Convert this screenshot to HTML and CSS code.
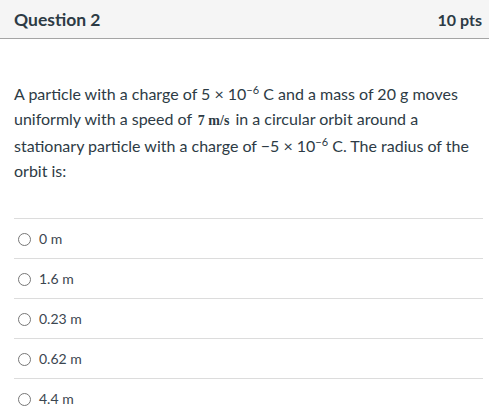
FILE: index.html
```html
<!DOCTYPE html>
<html>
<head>
<meta charset="utf-8">
<link rel="stylesheet" href="styles.css">
</head>
<body>
<div class="question">
  <div class="header">
    <span class="title">Question 2</span>
    <span class="pts">10 pts</span>
  </div>
  <div class="body">
    <p class="text">A particle with a charge of 5 × 10<sup>−6</sup> C and a mass of 20 g moves uniformly with a speed of <span class="img">7 m/s</span> in a circular orbit around a stationary particle with a charge of −5 × 10<sup>−6</sup> C. The radius of the orbit is:</p>
    <div class="answers">
      <div class="answer"><span class="radio"></span><span class="label">0 m</span></div>
      <div class="answer"><span class="radio"></span><span class="label">1.6 m</span></div>
      <div class="answer"><span class="radio"></span><span class="label">0.23 m</span></div>
      <div class="answer"><span class="radio"></span><span class="label">0.62 m</span></div>
      <div class="answer"><span class="radio"></span><span class="label">4.4 m</span></div>
    </div>
  </div>
</div>
</body>
</html>
```

FILE: styles.css
```css
html, body {
  margin: 0;
  padding: 0;
  background: #fff;
}
body {
  font-family: Lato, "Liberation Sans", sans-serif;
  color: #2d3b45;
}
.header {
  height: 38px;
  background: #f5f5f5;
  border-bottom: 1px solid #a5a5a5;
  display: flex;
  align-items: center;
  justify-content: space-between;
  padding: 0 7px 0 14px;
}
.title {
  font-size: 17.5px;
  font-weight: 700;
}
.pts {
  font-size: 16px;
  font-weight: 700;
  color: #2d3b45;
}
.body {
  padding: 0 6px 0 14px;
}
.text {
  margin: 42px 0 0 0;
  font-size: 16px;
  line-height: 25px;
}
.text sup {
  font-size: 11px;
  line-height: 1;
  vertical-align: super;
}
.img {
  font-family: "Liberation Serif", serif;
  font-weight: 700;
  font-size: 14px;
  margin: 0 2px;
}
.answers {
  margin-top: 35px;
}
.answer {
  height: 39px;
  border-top: 1px solid #dcdcdc;
  display: flex;
  align-items: center;
}
.radio {
  width: 11px;
  height: 11px;
  border: 1.3px solid #777;
  border-radius: 50%;
  margin-left: 4px;
  margin-top: 1px;
}
.label {
  font-size: 14px;
  margin-left: 8px;
  color: #3b4650;
}
```
